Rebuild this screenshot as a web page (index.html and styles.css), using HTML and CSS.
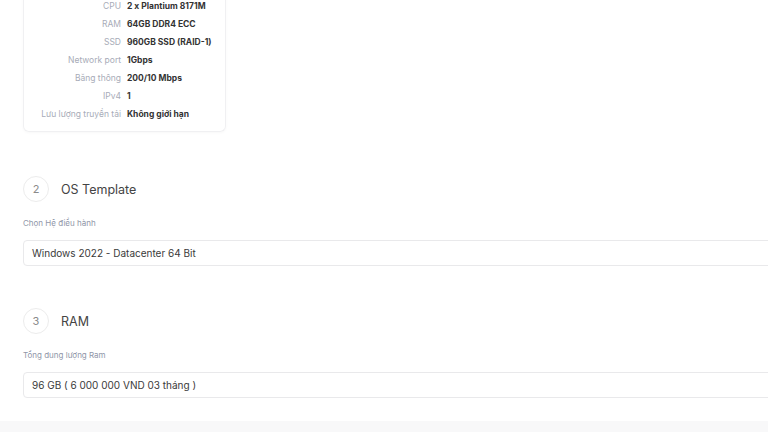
FILE: index.html
```html
<!DOCTYPE html>
<html lang="vi">
<head>
<meta charset="utf-8">
<link rel="stylesheet" href="styles.css">
</head>
<body>
<main class="page">
  <div class="spec-card">
    <div class="spec-row"><span class="spec-label">CPU</span><span class="spec-value">2 x Plantium 8171M</span></div>
    <div class="spec-row"><span class="spec-label">RAM</span><span class="spec-value">64GB DDR4 ECC</span></div>
    <div class="spec-row"><span class="spec-label">SSD</span><span class="spec-value">960GB SSD (RAID-1)</span></div>
    <div class="spec-row"><span class="spec-label">Network port</span><span class="spec-value">1Gbps</span></div>
    <div class="spec-row"><span class="spec-label">Băng thông</span><span class="spec-value">200/10 Mbps</span></div>
    <div class="spec-row"><span class="spec-label">IPv4</span><span class="spec-value">1</span></div>
    <div class="spec-row"><span class="spec-label">Lưu lượng truyền tải</span><span class="spec-value">Không giới hạn</span></div>
  </div>

  <section class="step">
    <div class="step-head"><span class="step-num">2</span><h2 class="step-title">OS Template</h2></div>
    <label class="field-label">Chọn Hệ điều hành</label>
    <div class="select">Windows 2022 - Datacenter 64 Bit</div>
  </section>

  <section class="step">
    <div class="step-head"><span class="step-num">3</span><h2 class="step-title">RAM</h2></div>
    <label class="field-label">Tổng dung lượng Ram</label>
    <div class="select">96 GB ( 6 000 000 VND 03 tháng )</div>
  </section>
</main>
<footer class="band"></footer>
</body>
</html>
```
FILE: styles.css
```css
html, body {
  margin: 0;
  padding: 0;
  height: 432px;
  overflow: hidden;
  background: #fff;
  font-family: Inter, "Noto Sans", sans-serif;
  color: #333;
}
.page {
  padding: 0 0 0 23px;
  width: 820px;
}
.spec-card {
  width: 181px;
  margin-top: -13px;
  padding: 10px 10px 8px 10px;
  border: 1px solid #f0f0f2;
  border-top: none;
  border-radius: 6px;
  box-shadow: 0 1px 3px rgba(0,0,0,0.03);
  box-sizing: content-box;
}
.spec-row {
  display: grid;
  grid-template-columns: 87px 1fr;
  column-gap: 6px;
  height: 18px;
  line-height: 18px;
  font-size: 8.5px;
  white-space: nowrap;
}
.spec-label {
  text-align: right;
  color: #a8acb8;
}
.spec-value {
  font-weight: 700;
  color: #333;
}
.step {
  padding-top: 44px;
}
.step + .step {
  padding-top: 42px;
}
.step-head {
  display: flex;
  align-items: center;
  gap: 12px;
  height: 26px;
}
.step-num {
  width: 24px;
  height: 24px;
  border: 1px solid #ececec;
  border-radius: 50%;
  display: flex;
  align-items: center;
  justify-content: center;
  font-size: 11px;
  color: #8a8a8a;
}
.step-title {
  margin: 0;
  font-size: 12.5px;
  font-weight: 400;
  color: #444;
}
.field-label {
  display: block;
  margin-top: 15px;
  height: 12px;
  line-height: 12px;
  font-size: 8px;
  color: #8f96a8;
}
.select {
  margin-top: 11px;
  height: 24px;
  line-height: 24px;
  padding-left: 8px;
  border: 1px solid #e9e9eb;
  border-radius: 4px;
  font-size: 10px;
  color: #3a3a3a;
}
.band {
  margin-top: 23px;
  height: 20px;
  background: #f8f8f9;
}
```
